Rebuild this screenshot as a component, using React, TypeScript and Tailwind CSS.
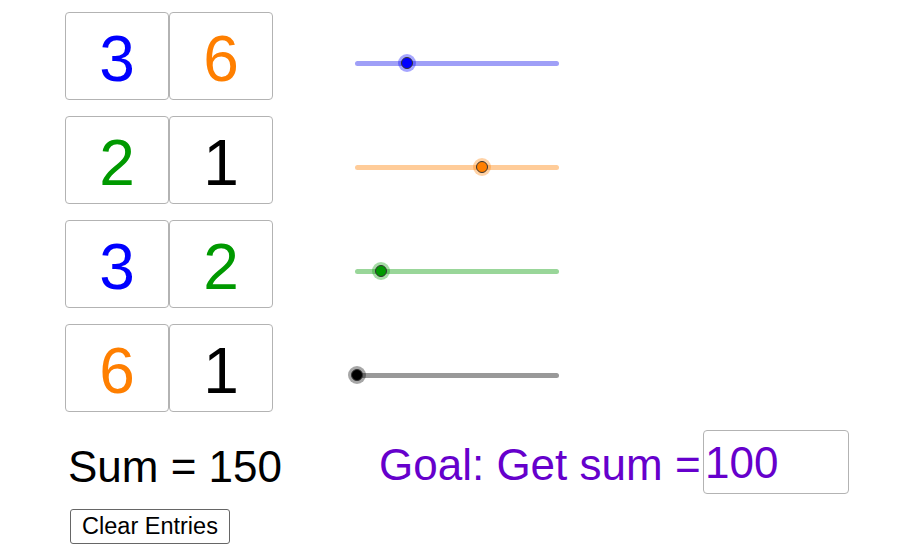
const ROWS = [
  { a: { v: '3', c: 'text-[#0000ff]' }, b: { v: '6', c: 'text-[#ff7f00]' }, knob: 52, track: 'bg-[#9f9ff7]', dot: 'bg-[#0000ff]', halo: 'bg-[#0000ff]/35' },
  { a: { v: '2', c: 'text-[#009900]' }, b: { v: '1', c: 'text-black' }, knob: 127, track: 'bg-[#ffcc99]', dot: 'bg-[#ff7f00]', halo: 'bg-[#ff7f00]/35' },
  { a: { v: '3', c: 'text-[#0000ff]' }, b: { v: '2', c: 'text-[#009900]' }, knob: 26, track: 'bg-[#99d699]', dot: 'bg-[#009900]', halo: 'bg-[#009900]/35' },
  { a: { v: '6', c: 'text-[#ff7f00]' }, b: { v: '1', c: 'text-black' }, knob: 2, track: 'bg-[#999999]', dot: 'bg-black', halo: 'bg-black/35' },
]

function Cell({ v, c }: { v: string; c: string }) {
  return (
    <div
      className={`flex h-[88px] w-[104px] items-center justify-center rounded-[4px] border border-[#b3b3b3] bg-white pt-[5px] text-[64px] leading-none ${c}`}
    >
      {v}
    </div>
  )
}

function Slider({ knob, track, dot, halo }: { knob: number; track: string; dot: string; halo: string }) {
  return (
    <div className={`relative ml-[82px] mt-[49px] h-[4.5px] w-[204px] rounded-full ${track}`}>
      {/* knob sits over the track */}
      <div
        className={`absolute top-1/2 h-[18px] w-[18px] -translate-x-1/2 -translate-y-1/2 rounded-full ${halo}`}
        style={{ left: knob }}
      />
      <div
        className={`absolute top-1/2 h-[12px] w-[12px] -translate-x-1/2 -translate-y-1/2 rounded-full border border-[#333] ${dot}`}
        style={{ left: knob }}
      />
    </div>
  )
}

export default function App() {
  return (
    <div className="h-[558px] w-[903px] bg-white font-['Liberation_Sans',Arial,sans-serif]">
      <div className="flex flex-col gap-[16px] pl-[65px] pt-[12px]">
        {ROWS.map((r, i) => (
          <div key={i} className="flex items-start">
            <Cell {...r.a} />
            <Cell {...r.b} />
            <Slider knob={r.knob} track={r.track} dot={r.dot} halo={r.halo} />
          </div>
        ))}
      </div>
      <div className="mt-[18px] flex items-start pl-[68px]">
        <div className="flex w-[311px] flex-col items-start">
          <div className="mt-[15px] text-[44px] leading-none text-black">Sum = 150</div>
          <button
            type="button"
            className="ml-[2px] mt-[20px] h-[35px] w-[160px] rounded-[3px] border border-[#666] bg-white text-[23.5px] leading-none text-black"
          >
            Clear Entries
          </button>
        </div>
        <div className="mt-[13px] w-[324px] whitespace-nowrap text-[44px] leading-none text-[#6600cc]">
          Goal: Get sum =
        </div>
        <div className="flex h-[64px] w-[146px] items-center rounded-[4px] border border-[#b3b3b3] pl-[1px] pt-[2px] text-[44px] leading-none text-[#6600cc]">
          100
        </div>
      </div>
    </div>
  )
}
